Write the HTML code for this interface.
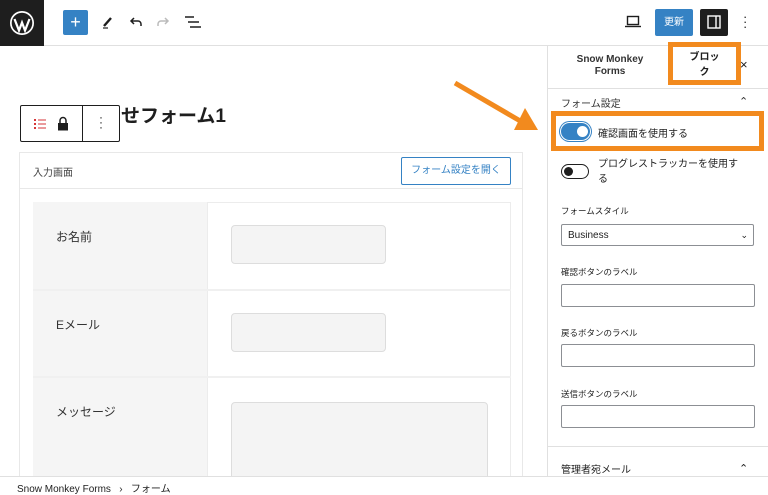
<!DOCTYPE html>
<html><head><meta charset="utf-8"><style>
*{box-sizing:border-box;margin:0;padding:0}
body{width:768px;height:494px;overflow:hidden;background:#fff;font-family:"Liberation Sans","Noto Sans CJK JP",sans-serif;color:#1e1e1e;position:relative}
.a{position:absolute}
.t{font-size:10px}
</style></head><body>
<div class="a" style="left:0;top:0;width:768px;height:46px;border-bottom:1px solid #e0e0e0"></div>
<div class="a" style="left:0;top:0;width:44px;height:46px;background:#1e1e1e"></div>
<svg class="a" style="left:9px;top:10px" width="26" height="26" viewBox="0 0 26 26"><circle cx="13" cy="13" r="12" fill="#fff"/><circle cx="13" cy="13" r="10.3" fill="#1e1e1e"/><path d="M5.5 9 L10 20.5 L13 12.5 L16 20.5 L20.5 9" stroke="#fff" stroke-width="2.2" fill="none"/></svg>
<div class="a" style="left:63px;top:10px;width:25px;height:25px;background:#3582c4;border-radius:2px;color:#fff;font-size:18px;line-height:24px;text-align:center">+</div>
<svg class="a" style="left:100px;top:14px" width="16" height="16" viewBox="0 0 16 16"><path d="M4 12 L11 4" stroke="#1e1e1e" stroke-width="2.4"/><path d="M3 14 H8" stroke="#1e1e1e" stroke-width="1.2"/></svg>
<svg class="a" style="left:127px;top:14px" width="16" height="16" viewBox="0 0 16 16"><path d="M4 7 H11 a3 3 0 0 1 3 3 V12 M7 4 L4 7 L7 10" stroke="#1e1e1e" stroke-width="1.5" fill="none"/></svg>
<svg class="a" style="left:156px;top:14px" width="16" height="16" viewBox="0 0 16 16"><path d="M12 7 H5 a3 3 0 0 0 -3 3 V12 M9 4 L12 7 L9 10" stroke="#bbb" stroke-width="1.5" fill="none"/></svg>
<svg class="a" style="left:184px;top:15px" width="18" height="14" viewBox="0 0 18 14"><path d="M1 2 H10 M4 7 H15 M6 12 H17" stroke="#1e1e1e" stroke-width="1.5"/></svg>
<svg class="a" style="left:625px;top:15px" width="16" height="13" viewBox="0 0 16 13"><rect x="2.5" y="1.5" width="11" height="8" fill="none" stroke="#1e1e1e" stroke-width="1.4"/><path d="M0 11.5 H16" stroke="#1e1e1e" stroke-width="1.4"/></svg>
<div class="a" style="left:655px;top:9px;width:38px;height:27px;background:#3582c4;border-radius:2px;color:#fff;font-size:10px;line-height:27px;text-align:center">更新</div>
<div class="a" style="left:700px;top:9px;width:28px;height:27px;background:#1e1e1e;border-radius:2px"></div>
<svg class="a" style="left:706px;top:14px" width="16" height="16" viewBox="0 0 16 16"><rect x="2" y="2" width="12" height="12" fill="none" stroke="#fff" stroke-width="1.4"/><path d="M10 2 V14" stroke="#fff" stroke-width="1.4"/></svg>
<div class="a" style="left:743px;top:14px;font-size:13px;line-height:5px;color:#1e1e1e;width:4px;text-align:center">·<br>·<br>·</div>

<div class="a" style="left:121px;top:101px;font-size:19px;font-weight:bold;white-space:nowrap">せフォーム1</div>
<div class="a" style="left:20px;top:105px;width:100px;height:37px;border:1px solid #1e1e1e;border-radius:2px;background:#fff;display:flex">
 <div style="width:62px;border-right:1px solid #1e1e1e;position:relative">
  <svg class="a" style="left:12px;top:11px" width="14" height="14" viewBox="0 0 14 14"><g fill="#d63638"><rect x="1" y="2" width="2" height="2"/><rect x="1" y="6" width="2" height="2"/><rect x="1" y="10" width="2" height="2"/><rect x="5" y="2.5" width="8" height="1"/><rect x="5" y="6.5" width="8" height="1"/><rect x="5" y="10.5" width="8" height="1"/></g></svg>
  <svg class="a" style="left:36px;top:10px" width="12" height="15" viewBox="0 0 12 15"><path d="M3 7 V4.5 a3 3 0 0 1 6 0 V7" stroke="#1e1e1e" stroke-width="1.5" fill="none"/><rect x="1" y="7" width="10" height="7.5" fill="#1e1e1e"/></svg>
 </div>
 <div style="flex:1;text-align:center;font-size:12px;line-height:5px;padding-top:9px">·<br>·<br>·</div>
</div>
<div class="a" style="left:19px;top:152px;width:504px;height:340px;border:1px solid #e8e8e8"></div>
<div class="a" style="left:19px;top:188px;width:504px;border-top:1px solid #e8e8e8"></div>
<div class="a t" style="left:33px;top:164px;color:#444">入力画面</div>
<div class="a" style="left:401px;top:157px;width:110px;height:28px;border:1px solid #3582c4;border-radius:2px;color:#3582c4;font-size:10px;line-height:26px;text-align:center">フォーム設定を開く</div>
<div class="a" style="left:33px;top:202px;width:478px;height:280px;border:1px solid #ececec"></div>
<div class="a" style="left:33px;top:202px;width:175px;height:280px;background:#f5f5f5;border-right:1px solid #ececec"></div>
<div class="a" style="left:33px;top:289px;width:478px;border-top:2px solid #f0f0f0"></div>
<div class="a" style="left:33px;top:376px;width:478px;border-top:2px solid #f0f0f0"></div>
<div class="a" style="left:56px;top:228px;font-size:12px;color:#333">お名前</div>
<div class="a" style="left:56px;top:316px;font-size:12px;color:#333">Eメール</div>
<div class="a" style="left:56px;top:403px;font-size:12px;color:#333">メッセージ</div>
<div class="a" style="left:231px;top:225px;width:155px;height:39px;background:#f4f4f4;border:1px solid #ddd;border-radius:4px"></div>
<div class="a" style="left:231px;top:313px;width:155px;height:39px;background:#f4f4f4;border:1px solid #ddd;border-radius:4px"></div>
<div class="a" style="left:231px;top:402px;width:257px;height:90px;background:#f4f4f4;border:1px solid #ddd;border-radius:4px"></div>

<svg class="a" style="left:440px;top:70px" width="110" height="80" viewBox="0 0 110 80"><path d="M15 13 L82 52" stroke="#f28a1e" stroke-width="5"/><polygon points="85,38 98,60 74,60" fill="#f28a1e"/></svg>

<div class="a" style="left:547px;top:46px;width:221px;height:448px;background:#fff;border-left:1px solid #e0e0e0"></div>
<div class="a" style="left:548px;top:88px;width:220px;border-top:1px solid #e0e0e0"></div>
<div class="a" style="left:560px;top:54px;width:100px;text-align:center;font-size:10px;font-weight:bold;line-height:12px;color:#333">Snow Monkey<br>Forms</div>
<div class="a" style="left:668px;top:42px;width:73px;height:43px;border:5px solid #f28a1e;background:#fff;text-align:center;font-size:10px;font-weight:bold;line-height:15px;padding-top:3px">ブロッ<br>ク</div>
<div class="a" style="left:740px;top:57px;font-size:13px">×</div>
<div class="a t" style="left:561px;top:95px;color:#333">フォーム設定</div>
<div class="a" style="left:739px;top:95px;font-size:11px;color:#333">⌃</div>
<div class="a" style="left:551px;top:111px;width:213px;height:40px;border:5px solid #f28a1e"></div>
<div class="a" style="left:561px;top:123px;width:29px;height:17px;background:#3582c4;border-radius:9px;box-shadow:0 0 0 1px #fff,0 0 0 2px #3582c4"></div>
<div class="a" style="left:577px;top:126px;width:11px;height:11px;background:#fff;border-radius:50%"></div>
<div class="a t" style="left:598px;top:125px">確認画面を使用する</div>
<div class="a" style="left:561px;top:164px;width:28px;height:15px;border:1px solid #1e1e1e;border-radius:8px"></div>
<div class="a" style="left:564px;top:167px;width:9px;height:9px;background:#1e1e1e;border-radius:50%"></div>
<div class="a t" style="left:598px;top:157px;line-height:15px">プログレストラッカーを使用す<br>る</div>
<div class="a" style="left:561px;top:205px;font-size:8.5px">フォームスタイル</div>
<div class="a" style="left:561px;top:224px;width:193px;height:22px;border:1px solid #8c8f94;border-radius:2px;font-size:10px;line-height:21px;padding-left:6px">Business<span style="position:absolute;right:5px;top:0;font-size:9px">⌄</span></div>
<div class="a" style="left:561px;top:266px;font-size:8.5px">確認ボタンのラベル</div>
<div class="a" style="left:561px;top:284px;width:194px;height:23px;border:1px solid #8c8f94;border-radius:2px"></div>
<div class="a" style="left:561px;top:327px;font-size:8.5px">戻るボタンのラベル</div>
<div class="a" style="left:561px;top:344px;width:194px;height:23px;border:1px solid #8c8f94;border-radius:2px"></div>
<div class="a" style="left:561px;top:388px;font-size:8.5px">送信ボタンのラベル</div>
<div class="a" style="left:561px;top:405px;width:194px;height:23px;border:1px solid #8c8f94;border-radius:2px"></div>
<div class="a" style="left:548px;top:446px;width:220px;border-top:1px solid #e0e0e0"></div>
<div class="a t" style="left:561px;top:461px">管理者宛メール</div>
<div class="a" style="left:739px;top:462px;font-size:11px">⌃</div>

<div class="a" style="left:0;top:476px;width:768px;height:18px;background:#fff;border-top:1px solid #e0e0e0"></div>
<div class="a" style="left:17px;top:480px;font-size:10px;color:#1e1e1e">Snow Monkey Forms &nbsp;&nbsp;›&nbsp;&nbsp; フォーム</div>
</body></html>
